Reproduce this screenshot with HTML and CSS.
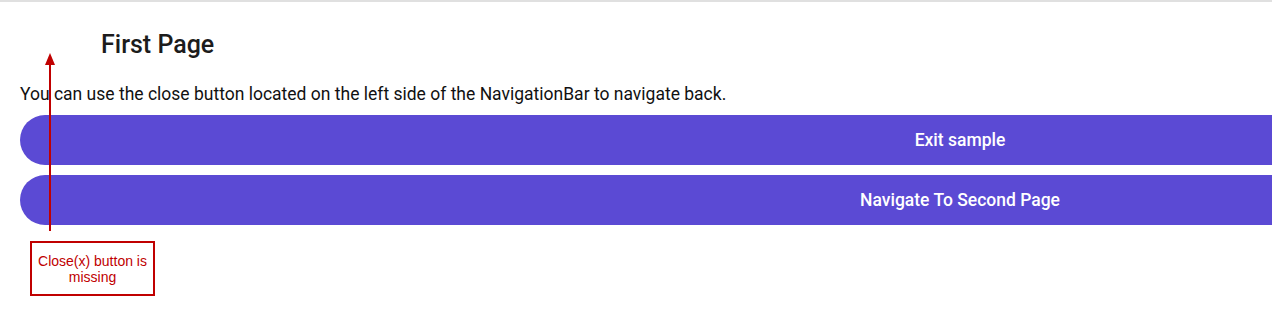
FILE: index.html
```html
<!DOCTYPE html>
<html>
<head>
<meta charset="utf-8">
<link rel="stylesheet" href="styles.css">
</head>
<body>
<div class="page">
  <header class="navbar">
    <h1 class="title">First Page</h1>
  </header>
  <main class="content">
    <p class="info">You can use the close button located on the left side of the NavigationBar to navigate back.</p>
    <button class="btn">Exit sample</button>
    <button class="btn">Navigate To Second Page</button>
  </main>
  <div class="annotation">
    <svg class="arrow" width="20" height="180" viewBox="0 0 20 180">
      <line x1="10" y1="8" x2="10" y2="178" stroke="#c00000" stroke-width="2"/>
      <polygon points="10,0 5,12 15,12" fill="#c00000"/>
    </svg>
    <div class="note">Close(x) button is missing</div>
  </div>
</div>
</body>
</html>
```
FILE: styles.css
```css
html, body {
  margin: 0;
  padding: 0;
  background: #fff;
  overflow: hidden;
}
.page {
  position: relative;
  width: 1920px;
  height: 317px;
  border-top: 2px solid #e0e0e0;
  font-family: Roboto, "Liberation Sans", sans-serif;
  color: #1a1a1a;
}
.navbar {
  height: 82px;
  display: flex;
  align-items: center;
  padding-left: 101px;
  padding-top: 2px;
  box-sizing: border-box;
}
.title {
  margin: 0;
  font-size: 25px;
  font-weight: 500;
  color: #1c1c1c;
}
.content {
  padding: 0 20px;
  display: flex;
  flex-direction: column;
  gap: 10px;
}
.info {
  margin: 0 0 1px 0;
  font-size: 17.5px;
  line-height: 20px;
  color: #111;
}
.btn {
  height: 50px;
  border: none;
  border-radius: 25px;
  background: #5b4ad4;
  color: #fff;
  font-family: Roboto, "Liberation Sans", sans-serif;
  font-size: 17.5px;
  font-weight: 500;
  padding: 0;
}
.annotation {
  position: absolute;
  left: 0;
  top: 0;
}
.arrow {
  position: absolute;
  left: 40px;
  top: 51px;
}
.note {
  position: absolute;
  left: 30px;
  top: 239px;
  width: 121px;
  height: 51px;
  border: 2px solid #c00000;
  color: #c00000;
  font-family: "Liberation Sans", Arial, sans-serif;
  font-size: 14px;
  line-height: 16px;
  text-align: center;
  display: flex;
  align-items: center;
  justify-content: center;
  padding: 0;
}
```
